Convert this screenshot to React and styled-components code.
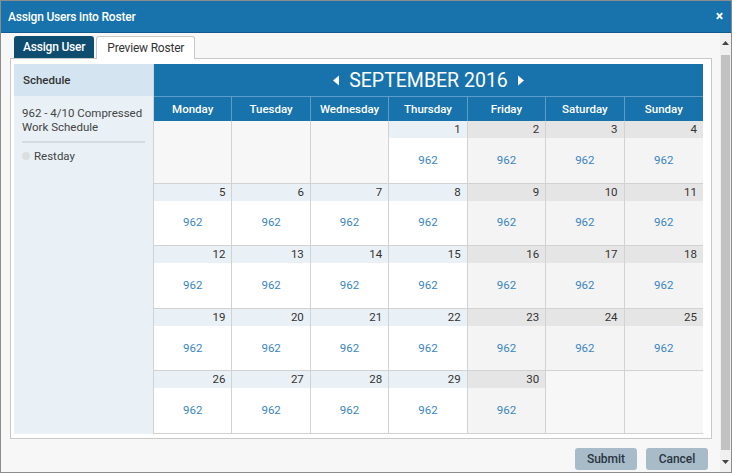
import styled, { createGlobalStyle } from "styled-components";

const GlobalStyle = createGlobalStyle`
  html, body {
    margin: 0;
    padding: 0;
    background: #ffffff;
  }
  body {
    font-family: Roboto, "Liberation Sans", sans-serif;
  }
`;

const days = [
  { n: null }, { n: null }, { n: null },
  ...Array.from({ length: 30 }, (_, i) => ({ n: i + 1 })),
  { n: null }, { n: null },
];
const weekdays = ["Monday", "Tuesday", "Wednesday", "Thursday", "Friday", "Saturday", "Sunday"];

const App = () => {
  return (
    <Window>
      <GlobalStyle />
      <TitleBar>
        <span>Assign Users into Roster</span>
        <Close>×</Close>
      </TitleBar>
      <Body>
        <Content>
          <Tabs>
            <Tab>Assign User</Tab>
            <Tab active>Preview Roster</Tab>
          </Tabs>
          <Panel>
            <Sidebar>
              <SideHeader>Schedule</SideHeader>
              <SideItem>962 - 4/10 Compressed Work Schedule</SideItem>
              <Restday>
                <Dot />
                Restday
              </Restday>
            </Sidebar>
            <Calendar>
              <MonthBar>
                <Arrow viewBox="0 0 6 10">
                  <path d="M6 0 L0 5 L6 10 Z" fill="#fff" />
                </Arrow>
                SEPTEMBER 2016
                <Arrow viewBox="0 0 6 10">
                  <path d="M0 0 L6 5 L0 10 Z" fill="#fff" />
                </Arrow>
              </MonthBar>
              <WeekRow>
                {weekdays.map((d) => (
                  <WeekDay key={d}>{d}</WeekDay>
                ))}
              </WeekRow>
              <Grid>
                {days.map((d, i) => {
                  const rest = i % 7 >= 4;
                  if (!d.n) return <EmptyCell key={i} />;
                  return (
                    <Cell key={i}>
                      <DayNum rest={rest}>{d.n}</DayNum>
                      <DayBody rest={rest}>
                        <Code>962</Code>
                      </DayBody>
                    </Cell>
                  );
                })}
              </Grid>
            </Calendar>
          </Panel>
          <Footer>
            <Button>Submit</Button>
            <Button>Cancel</Button>
          </Footer>
        </Content>
        <Scrollbar>
          <ScrollBtn>
            <svg width="7" height="4" viewBox="0 0 7 4">
              <path d="M0 4 L3.5 0 L7 4 Z" fill="#444" />
            </svg>
          </ScrollBtn>
          <Thumb />
          <ScrollBtn>
            <svg width="7" height="4" viewBox="0 0 7 4">
              <path d="M0 0 L3.5 4 L7 0 Z" fill="#444" />
            </svg>
          </ScrollBtn>
        </Scrollbar>
      </Body>
    </Window>
  );
};

export default App;

const Window = styled.div`
  width: 732px;
  height: 473px;
  box-sizing: border-box;
  border: 1px solid #8c8c8c;
  display: flex;
  flex-direction: column;
  overflow: hidden;
`;

const TitleBar = styled.div`
  height: 31px;
  flex-shrink: 0;
  background: #1872ab;
  border-bottom: 1px solid #0f5d8f;
  color: #fff;
  display: flex;
  align-items: center;
  justify-content: space-between;
  padding: 0 8px 0 7px;
  font-size: 12px;
  font-weight: 500;
  letter-spacing: -0.2px;
`;

const Close = styled.span`
  font-size: 14px;
  font-weight: bold;
  line-height: 1;
  margin-top: -2px;
`;

const Body = styled.div`
  flex: 1;
  display: flex;
  min-height: 0;
`;

const Content = styled.div`
  flex: 1;
  background: #f7f7f7;
  padding: 2px 8px 0 9px;
  display: flex;
  flex-direction: column;
`;

const Tabs = styled.div`
  display: flex;
  gap: 2px;
  padding-left: 4px;
  height: 23px;
  align-items: flex-end;
`;

const Tab = styled.div`
  box-sizing: border-box;
  height: ${(p) => (p.active ? "23px" : "22px")};
  margin-bottom: ${(p) => (p.active ? "-1px" : "0")};
  padding: 0 ${(p) => (p.active ? "10px" : "9px")};
  display: flex;
  align-items: center;
  font-size: 12px;
  letter-spacing: -0.2px;
  border-radius: 3px 3px 0 0;
  background: ${(p) => (p.active ? "#ffffff" : "#0e4d70")};
  color: ${(p) => (p.active ? "#333" : "#fff")};
  font-weight: ${(p) => (p.active ? "normal" : "500")};
  border: ${(p) => (p.active ? "1px solid #c8c8c8" : "none")};
  border-bottom: none;
  position: relative;
  z-index: 1;
`;

const Panel = styled.div`
  height: 381px;
  box-sizing: border-box;
  border: 1px solid #c8c8c8;
  background: #fff;
  padding: 5px 8px 4px 3px;
  display: flex;
`;

const Sidebar = styled.div`
  width: 139px;
  background: #e9f1f6;
  display: flex;
  flex-direction: column;
  color: #444;
  font-size: 11.5px;
`;

const SideHeader = styled.div`
  height: 32px;
  background: #d4e5f1;
  display: flex;
  align-items: center;
  padding-left: 9px;
  font-weight: 500;
  color: #333;
`;

const SideItem = styled.div`
  margin: 0 8px;
  padding: 10px 0 7px;
  line-height: 14px;
  border-bottom: 2px solid #d6dde2;
`;

const Restday = styled.div`
  display: flex;
  align-items: center;
  gap: 4px;
  padding: 6px 8px;
`;

const Dot = styled.span`
  width: 8px;
  height: 8px;
  border-radius: 50%;
  background: #dcdfe1;
`;

const Calendar = styled.div`
  flex: 1;
  display: flex;
  flex-direction: column;
  border-left: 1px solid #d2d2d2;
`;

const MonthBar = styled.div`
  height: 32px;
  background: #1872ab;
  color: #fff;
  font-size: 19.5px;
  display: flex;
  align-items: center;
  justify-content: center;
  gap: 10px;
  border-bottom: 1px solid #5b9cca;
`;

const Arrow = styled.svg`
  width: 6px;
  height: 11px;
`;

const WeekRow = styled.div`
  display: grid;
  grid-template-columns: repeat(7, 1fr);
  height: 24px;
  background: #1872ab;
`;

const WeekDay = styled.div`
  display: flex;
  align-items: center;
  justify-content: center;
  color: #fff;
  font-size: 11.5px;
  font-weight: 500;
  border-right: 1px solid #5b9cca;
  &:last-child {
    border-right: none;
  }
`;

const Grid = styled.div`
  flex: 1;
  display: grid;
  grid-template-columns: repeat(7, 1fr);
  grid-template-rows: repeat(5, 1fr);
`;

const Cell = styled.div`
  display: flex;
  flex-direction: column;
  border-right: 1px solid #d2d2d2;
  border-bottom: 1px solid #d2d2d2;
  &:nth-child(7n) {
    border-right: none;
  }
`;

const EmptyCell = styled(Cell)`
  background: #f7f7f7;
`;

const DayNum = styled.div`
  height: 17px;
  background: ${(p) => (p.rest ? "#e5e5e5" : "#eaf1f6")};
  color: #333;
  font-size: 11.5px;
  text-align: right;
  padding-right: 6px;
  line-height: 17px;
`;

const DayBody = styled.div`
  flex: 1;
  background: ${(p) => (p.rest ? "#f4f4f4" : "#ffffff")};
  display: flex;
  align-items: center;
  justify-content: center;
`;

const Code = styled.span`
  color: #3a86c3;
  font-size: 11.5px;
  margin-top: -1px;
`;

const Footer = styled.div`
  flex: 1;
  display: flex;
  justify-content: flex-end;
  align-items: flex-start;
  gap: 9px;
  padding: 9px 4px 0 0;
`;

const Button = styled.button`
  width: 62px;
  height: 22px;
  border: none;
  border-radius: 3px;
  background: #a7bbc9;
  color: #2a3540;
  font-family: inherit;
  font-size: 12px;
  font-weight: 500;
  padding: 0;
`;

const Scrollbar = styled.div`
  width: 11px;
  background: #f0f0f0;
  display: flex;
  flex-direction: column;
`;

const ScrollBtn = styled.div`
  height: 20px;
  display: flex;
  align-items: center;
  justify-content: center;
`;

const Thumb = styled.div`
  flex: 1;
  background: #c1c1c1;
  margin: 2px 1px;
`;
